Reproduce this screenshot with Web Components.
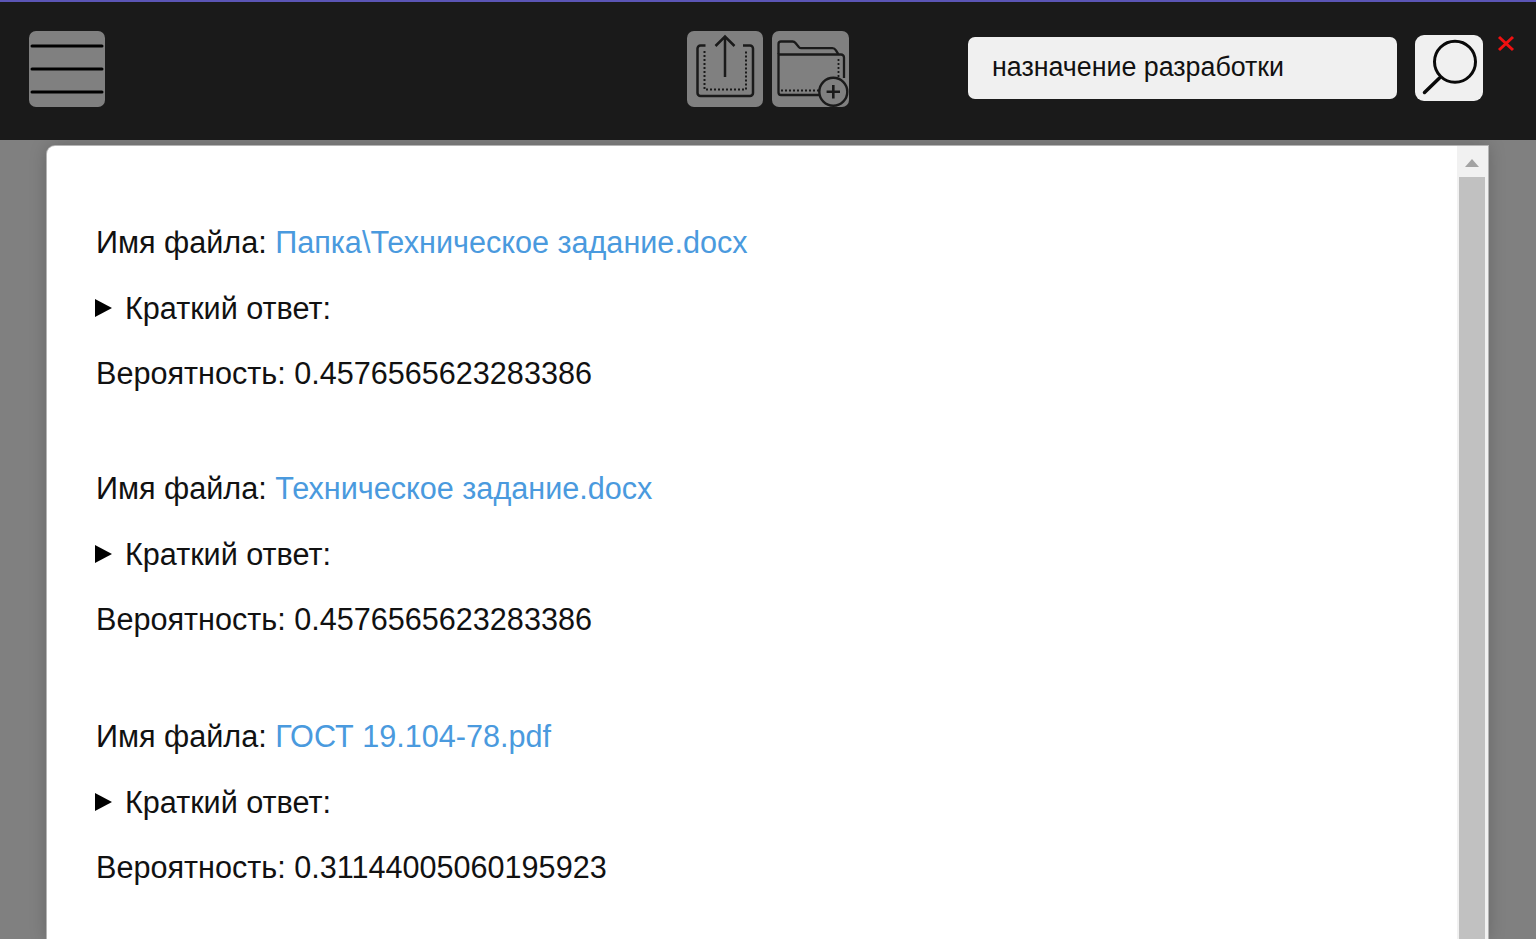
<!DOCTYPE html>
<html lang="ru">
<head>
<meta charset="utf-8">
<title>Поиск</title>
<style>
  html, body { margin: 0; height: 100%; overflow: hidden; }
  body { background: #808080; font-family: "Liberation Sans", Arial, sans-serif; }
</style>
</head>
<body>
<search-app></search-app>

<script>
(function() {

  const HEADER_ICONS = {
    menu: `<svg width="76" height="76" viewBox="0 0 76 76"><path d="M3 15H73M3 38H73M3 61H73" stroke="#000" stroke-width="3" stroke-linecap="round"/></svg>`,
    upload: `<svg width="76" height="76" viewBox="0 0 76 76" fill="none" stroke="#1a1a1a"><path d="M18.500 14.500h-5a3 3 0 0 0-3 3v44.500a3 3 0 0 0 3 3h49.500a3 3 0 0 0 3-3V17.500a3 3 0 0 0-3-3h-7" stroke-width="2.500"/><path d="M38 46V5.500M28.500 15L38 5.500 47.500 15" stroke-width="2.500"/><path d="M17.500 20v38.500H59V20" stroke-width="2" stroke-dasharray="2 2"/></svg>`,
    folder: `<svg width="77" height="76" viewBox="0 0 77 76" fill="none" stroke="#1a1a1a"><path d="M6.500 23V13a2.500 2.500 0 0 1 2.500-2.500h11.500a4 4 0 0 1 3 1.500l3.500 4.200a3 3 0 0 0 2.300 1h31a4 4 0 0 1 3.500 2l2.500 4" stroke-width="2.300"/><path d="M48 64H9a2.500 2.500 0 0 1-2.500-2.500V23.500H69a3 3 0 0 1 3 3V47" stroke-width="2.300"/><path d="M9 59.500h38M66.500 28v18" stroke-width="1.800" stroke-dasharray="2 2"/><circle cx="61.300" cy="60.700" r="14" fill="#808080" stroke-width="2.400"/><path d="M61.300 54v13.400M54.600 60.700h13.400" stroke-width="2.600"/></svg>`,
    search: `<svg width="68" height="66" viewBox="0 0 68 66" fill="none" stroke="#0a0a0a"><circle cx="40" cy="26.700" r="20.500" stroke-width="3"/><path d="M24.500 43L9.500 57.500" stroke-width="3.500" stroke-linecap="round"/></svg>`
  };

  const barTemplate = document.createElement('template');
  barTemplate.innerHTML = `
    <style>
      :host { display: flex; align-items: center; height: 134px; padding-bottom: 4px; border-top: 2px solid #5b55b5; background: #1a1a1a; position: relative; }
      .menu { margin-left: 29px; }
      .tools { display: flex; gap: 9px; margin-left: 582px; }
      .field { box-sizing: border-box; width: 429px; height: 62px; margin: 0 0 2px 119px; padding: 0 0 2px 24px; display: flex; align-items: center; background: #f0f0f0; border-radius: 7px; color: #111; font-size: 26.800px; }
      .go { margin: 0 0 2px 18px; }
      .close { position: absolute; left: 1497px; top: 33px; }
    </style>
    <icon-button class="menu" name="menu"></icon-button>
    <div class="tools">
      <icon-button name="upload"></icon-button>
      <icon-button name="folder"></icon-button>
    </div>
    <div class="field">назначение разработки</div>
    <icon-button class="go" name="search" light></icon-button>
    <svg class="close" width="18" height="18" viewBox="0 0 18 18"><path d="M2 2L16 15M16 2L2 15" stroke="#f01010" stroke-width="3"/></svg>
  `;

  class SearchBar extends HTMLElement {
    constructor() {
      super();
      this.attachShadow({mode: 'open'});
      this.shadowRoot.appendChild(barTemplate.content.cloneNode(true));
    }
  }

  class IconButton extends HTMLElement {
    constructor() {
      super();
      this.attachShadow({mode: 'open'});
      const name = this.getAttribute('name');
      this.shadowRoot.innerHTML = `
        <style>
          :host { display: block; border-radius: 7px; background: #808080; line-height: 0; }
          :host([light]) { background: #f0f0f0; border-radius: 9px; }
        </style>
        ${HEADER_ICONS[name]}
      `;
    }
  }

  const resultTemplate = document.createElement('template');
  resultTemplate.innerHTML = `
    <style>
      :host { display: block; color: #111; }
      p { margin: 0; height: 36px; line-height: 36px; white-space: nowrap; }
      a { color: #4a9ade; text-decoration: none; }
      .answer { display: flex; align-items: center; gap: 13px; margin: 30px 0 29px; margin-left: -1px; }
      .answer i { width: 0; height: 0; border-left: 17px solid #000; border-top: 9.500px solid transparent; border-bottom: 9.500px solid transparent; }
    </style>
    <p>Имя файла: <a href="#"><slot name="file"></slot></a></p>
    <p class="answer"><i></i>Краткий ответ:</p>
    <p>Вероятность: <slot name="score"></slot></p>
  `;

  class SearchResult extends HTMLElement {
    constructor() {
      super();
      this.attachShadow({mode: 'open'});
      this.shadowRoot.appendChild(resultTemplate.content.cloneNode(true));
    }
  }

  const scrollTemplate = document.createElement('template');
  scrollTemplate.innerHTML = `
    <style>
      :host { display: flex; flex-direction: column; width: 31px; box-sizing: border-box; padding-left: 2px; background: #f1f1f1; }
      .up { height: 31px; width: 26px; flex: none; display: flex; align-items: center; justify-content: center; }
      .up i { width: 0; height: 0; margin-top: 2px; border-bottom: 8px solid #a3a3a3; border-left: 7px solid transparent; border-right: 7px solid transparent; }
      .thumb { width: 26px; flex: 1; background: #c1c1c1; }
    </style>
    <div class="up"><i></i></div>
    <div class="thumb"></div>
  `;

  class ScrollRail extends HTMLElement {
    constructor() {
      super();
      this.attachShadow({mode: 'open'});
      this.shadowRoot.appendChild(scrollTemplate.content.cloneNode(true));
    }
  }

  const cardTemplate = document.createElement('template');
  cardTemplate.innerHTML = `
    <style>
      :host { display: flex; margin: 6px 48px 0 47px; height: 793px; background: #fff; border-radius: 8px 0 0 0; overflow: hidden; box-shadow: 0 0 0 1px #b4b4b4, 0 0 18px rgba(0,0,0,.22); font-size: 30.600px; }
      .list { flex: 1; display: flex; flex-direction: column; gap: 79px; padding: 78px 0 0 49px; }
      ::slotted(search-result:last-child) { margin-top: 2px; }
    </style>
    <div class="list"><slot></slot></div>
    <scroll-rail></scroll-rail>
  `;

  class ResultCard extends HTMLElement {
    constructor() {
      super();
      this.attachShadow({mode: 'open'});
      this.shadowRoot.appendChild(cardTemplate.content.cloneNode(true));
    }
  }

  const appTemplate = document.createElement('template');
  appTemplate.innerHTML = `
    <style>
      :host { display: block; height: 939px; overflow: hidden; }
    </style>
    <search-bar></search-bar>
    <result-card>
      <search-result><span slot="file">Папка\\Техническое задание.docx</span><span slot="score">0.4576565623283386</span></search-result>
      <search-result><span slot="file">Техническое задание.docx</span><span slot="score">0.4576565623283386</span></search-result>
      <search-result><span slot="file">ГОСТ 19.104-78.pdf</span><span slot="score">0.31144005060195923</span></search-result>
    </result-card>
  `;

  class SearchApp extends HTMLElement {
    constructor() {
      super();
      this.attachShadow({mode: 'open'});
      this.shadowRoot.appendChild(appTemplate.content.cloneNode(true));
    }
  }

  window.customElements.define('icon-button', IconButton);
  window.customElements.define('search-bar', SearchBar);
  window.customElements.define('search-result', SearchResult);
  window.customElements.define('scroll-rail', ScrollRail);
  window.customElements.define('result-card', ResultCard);
  window.customElements.define('search-app', SearchApp);
})();
</script>
</body>
</html>
